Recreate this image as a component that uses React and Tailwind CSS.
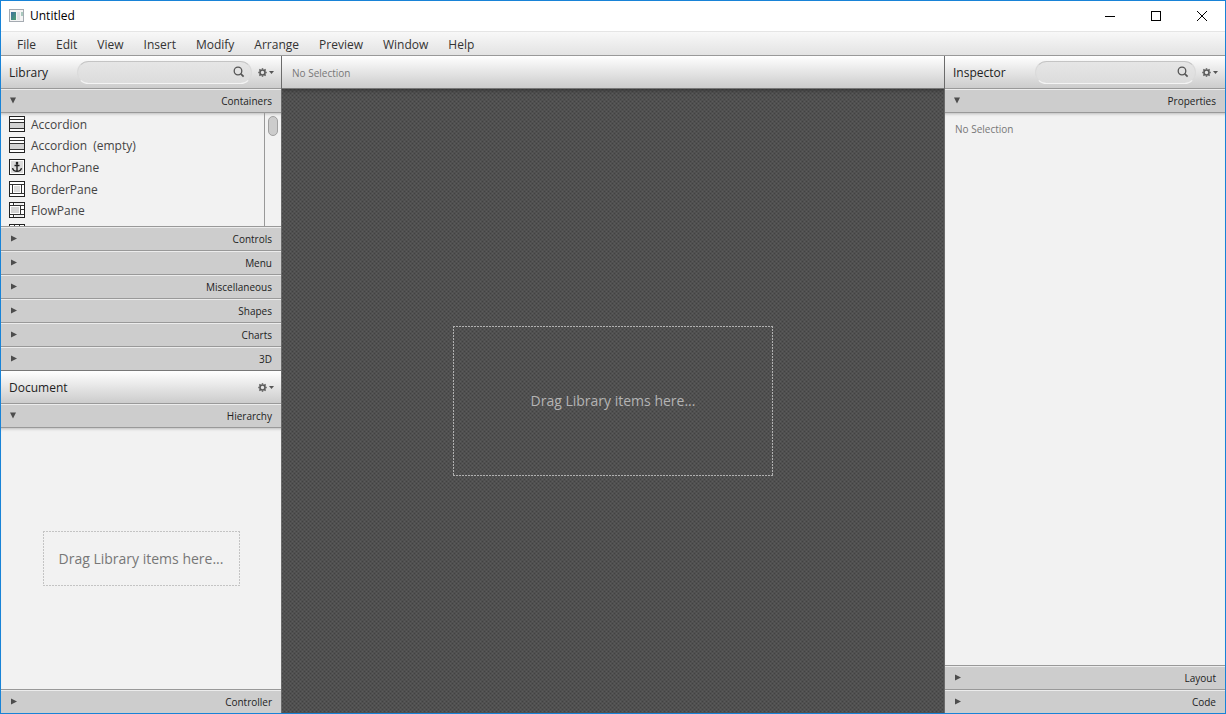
import React from "react";

const MENUS = ["File", "Edit", "View", "Insert", "Modify", "Arrange", "Preview", "Window", "Help"];
const LIBRARY_SECTIONS = ["Controls", "Menu", "Miscellaneous", "Shapes", "Charts", "3D"];

function AccordionIcon() {
  return (
    <>
      <rect x="1" y="7" width="14" height="5" fill="#d4d4d4" />
      <path d="M1 3.5H15M1 6.5H15M1 12.5H15" stroke="#333" />
    </>
  );
}

function AnchorIcon() {
  return (
    <>
      <rect x="2" y="2" width="12" height="12" fill="#dcdcdc" />
      <circle cx="8" cy="4" r="1.3" fill="#222" />
      <path d="M8 4V12M5.5 6.5H10.5" stroke="#222" strokeWidth="1.4" fill="none" />
      <path d="M3.5 9.2C4 11.5 6 12.3 8 12.3S12 11.5 12.5 9.2" stroke="#222" strokeWidth="1.4" fill="none" />
    </>
  );
}

function BorderIcon() {
  return (
    <>
      <rect x="5" y="5" width="6" height="6" fill="#dcdcdc" />
      <path d="M1 3.5H15M1 12.5H15M3.5 4V12M12.5 4V12" stroke="#333" />
    </>
  );
}

function FlowIcon() {
  return (
    <>
      <rect x="2" y="5" width="8" height="6" fill="#d4d4d4" />
      <path d="M1 3.5H15M1 12.5H15M4.5 1V3M11.5 4V12M12 7.5H15M4.5 13V15" stroke="#333" />
      <path d="M6 14H14M6 2H14" stroke="#dcdcdc" />
    </>
  );
}

function GridIcon() {
  return <path d="M5.5 1V15M10.5 1V15M1 5.5H15M1 10.5H15" stroke="#333" />;
}

const CONTAINERS = [
  { name: "Accordion", Icon: AccordionIcon },
  { name: "Accordion", note: "(empty)", Icon: AccordionIcon },
  { name: "AnchorPane", Icon: AnchorIcon },
  { name: "BorderPane", Icon: BorderIcon },
  { name: "FlowPane", Icon: FlowIcon },
  { Icon: GridIcon },
];

function PanelHeader({ title, searchClass, divider }) {
  return (
    <div
      className={
        "flex shrink-0 items-center bg-linear-to-b from-white to-[#cccccc] pr-[7px] pl-2 " +
        (divider ? "h-[33px] border-t border-[#777777]" : "h-8")
      }
    >
      <h2 className="flex-1 pt-[2px] text-xs text-[#222222]">{title}</h2>
      {searchClass && (
        <label
          className={
            "mr-[6px] flex h-[23px] items-center rounded-full border border-t-[#c4c4c4] border-x-[#dadada] border-b-[#f4f4f4] bg-linear-to-b from-[#e6e6e6] to-[#dcdcdc] pr-[6px] pl-3 " +
            searchClass
          }
        >
          <input type="search" aria-label={"Search " + title} className="min-w-0 flex-1 bg-transparent text-xs outline-none" />
          <svg width="12" height="12" viewBox="0 0 12 12" fill="none" stroke="#555" aria-hidden="true">
            <circle cx="5" cy="5" r="3.8" strokeWidth="1.3" />
            <path d="M7.8 7.8L10.6 10.6" strokeWidth="1.7" />
          </svg>
        </label>
      )}
      <button type="button" aria-label={title + " options"} className="flex h-5 items-center gap-[2px]">
        <svg width="9" height="9" viewBox="0 0 9 9" fill="none" stroke="#5a5a5a" aria-hidden="true">
          <circle cx="4.5" cy="4.5" r="2.5" strokeWidth="1.6" />
          <path d="M4.5 0.3V1.6M4.5 7.4V8.7M0.3 4.5H1.6M7.4 4.5H8.7M1.4 1.4L2.5 2.5M6.5 6.5L7.6 7.6M1.4 7.6L2.5 6.5M6.5 2.5L7.6 1.4" strokeWidth="1.5" />
        </svg>
        <svg width="5" height="3" viewBox="0 0 5 3" fill="#555" aria-hidden="true">
          <path d="M0 0H5L2.5 3Z" />
        </svg>
      </button>
    </div>
  );
}

function SectionHeader({ title, open }) {
  return (
    <h3 className="shrink-0">
      <button
        type="button"
        aria-expanded={!!open}
        className="flex h-6 w-full items-center justify-between border-t border-[#999999] bg-[#cdcdcd] px-[9px] text-[10px] text-[#222222] shadow-[inset_0_1px_0_#ececec]"
      >
        <svg width="7" height="7" viewBox="0 0 7 7" fill="#4d4d4d" aria-hidden="true">
          {open ? <path d="M0 0.5H6L3 6.5Z" /> : <path d="M1 0.5L7 3.5L1 6.5Z" />}
        </svg>
        <span className="pt-[2px]">{title}</span>
      </button>
    </h3>
  );
}

function Library() {
  return (
    <section className="flex shrink-0 flex-col">
      <PanelHeader title="Library" searchClass="w-[175px]" />
      <SectionHeader title="Containers" open />
      <div className="flex h-[114px] overflow-hidden border-t border-[#999999] bg-[#f2f2f2] shadow-[inset_0_3px_3px_-2px_#bbbbbb]">
        <ul className="grid h-[130px] flex-1 grid-rows-6 pl-2 text-xs text-[#444444]">
          {CONTAINERS.map(({ name, note, Icon }, i) => (
            <li key={i} className="flex items-center gap-[6px]">
              <svg width="16" height="16" viewBox="0 0 16 16" fill="none" className="shrink-0" aria-hidden="true">
                <rect x="0.5" y="0.5" width="15" height="15" fill="#fff" stroke="#222" />
                <Icon />
              </svg>
              {name && <span className="pt-[2px]">{name}</span>}
              {note && <span className="pt-[2px]">{note}</span>}
            </li>
          ))}
        </ul>
        <div className="w-[17px] border-l border-[#999999] px-[3px] pt-[3px]">
          <div className="h-5 w-[10px] rounded-full border border-[#a0a0a0] bg-[#cccccc]" />
        </div>
      </div>
      {LIBRARY_SECTIONS.map((name) => (
        <SectionHeader key={name} title={name} />
      ))}
    </section>
  );
}

function DashedFrame({ color }) {
  return (
    <svg className="absolute inset-0 h-full w-full" fill="none" stroke={color} strokeDasharray="2 1" aria-hidden="true" shapeRendering="crispEdges">
      <line x1="0" y1="0" x2="100%" y2="0" strokeWidth="2" />
      <line x1="0" y1="100%" x2="100%" y2="100%" strokeWidth="2" />
      <line x1="0" y1="0" x2="0" y2="100%" strokeWidth="2" />
      <line x1="100%" y1="0" x2="100%" y2="100%" strokeWidth="2" />
    </svg>
  );
}

function DocumentPanel() {
  return (
    <section className="flex min-h-0 flex-1 flex-col">
      <PanelHeader title="Document" divider />
      <SectionHeader title="Hierarchy" open />
      <div className="flex flex-1 items-center justify-center border-t border-[#999999] bg-[#f2f2f2] shadow-[inset_0_3px_3px_-2px_#bbbbbb]">
        <div className="relative flex h-[55px] w-[197px] items-center justify-center text-sm text-[#777777]">
          <DashedFrame color="#c4c4c4" />
          <p>Drag Library items here...</p>
        </div>
      </div>
      <SectionHeader title="Controller" />
    </section>
  );
}

function Weave() {
  return (
    <svg className="absolute inset-0 h-full w-full" aria-hidden="true" shapeRendering="crispEdges">
      <defs>
        <pattern id="weave" width="4" height="4" patternUnits="userSpaceOnUse">
          <rect width="4" height="4" fill="#505050" />
          <path d="M0 0H1V1H0ZM2 2H3V3H2Z" fill="#424242" />
          <path d="M2 0H3V1H2ZM0 2H1V3H0Z" fill="#5b5b5b" />
        </pattern>
      </defs>
      <rect width="100%" height="100%" fill="url(#weave)" />
    </svg>
  );
}

export default function App() {
  return (
    <div className="flex h-screen flex-col overflow-hidden border border-[#1883d7] bg-white font-['Open_Sans','Noto_Sans',sans-serif]">
      <header className="flex h-[30px] shrink-0 items-center justify-between pl-2">
        <div className="flex items-center gap-[6px]">
          <svg width="15" height="14" viewBox="0 0 15 14" aria-hidden="true">
            <defs>
              <linearGradient id="pane" x1="0" y1="0" x2="1" y2="1">
                <stop offset="0" stopColor="#3d6fa0" />
                <stop offset="1" stopColor="#4ca070" />
              </linearGradient>
            </defs>
            <rect x="0.5" y="0.5" width="14" height="12" fill="#f4f4f4" stroke="#a5abb2" />
            <rect x="2" y="3" width="5" height="8" fill="url(#pane)" />
            <rect x="8" y="3" width="3" height="8" fill="#dfe2e5" />
            <rect x="12" y="3" width="2" height="4" fill="#a9c8bd" />
          </svg>
          <h1 className="text-xs text-black">Untitled</h1>
        </div>
        <div className="flex h-full">
          <button type="button" aria-label="Minimize" className="flex w-[46px] items-center justify-center">
            <svg width="10" height="10" viewBox="0 0 10 10" stroke="#000"><path d="M0 5.5H10" /></svg>
          </button>
          <button type="button" aria-label="Maximize" className="flex w-[46px] items-center justify-center">
            <svg width="10" height="10" viewBox="0 0 10 10" fill="none" stroke="#000"><rect x="0.5" y="0.5" width="9" height="9" /></svg>
          </button>
          <button type="button" aria-label="Close" className="flex w-[46px] items-center justify-center">
            <svg width="10" height="10" viewBox="0 0 10 10" stroke="#000"><path d="M0 0L10 10M10 0L0 10" /></svg>
          </button>
        </div>
      </header>

      <nav className="flex h-[25px] shrink-0 items-center border-y border-t-[#e5e5e5] border-b-[#999999] bg-linear-to-b from-[#f8f8f8] to-[#e3e3e3] pt-[2px] pl-[6px] text-xs text-[#333333]">
        {MENUS.map((m) => (
          <button key={m} type="button" className="px-[10px]">{m}</button>
        ))}
      </nav>

      <div className="flex min-h-0 flex-1">
        <aside className="flex w-[281px] shrink-0 flex-col border-r border-[#6b6b6b]">
          <Library />
          <DocumentPanel />
        </aside>

        <main className="flex min-w-0 flex-1 flex-col overflow-hidden">
          <div className="relative z-10 flex h-[33px] shrink-0 items-center border-b border-[#777777] bg-linear-to-b from-white to-[#cccccc] px-[10px] pt-[2px] text-[10px] text-[#777777] shadow-[0_1px_4px_#333333]">
            No Selection
          </div>
          <div className="relative flex flex-1 items-center justify-center">
            <Weave />
            <div className="relative flex h-[150px] w-80 items-center justify-center text-sm text-[#b4b4b4]">
              <DashedFrame color="#b0b0b0" />
              <p>Drag Library items here...</p>
            </div>
          </div>
        </main>

        <aside className="flex w-[281px] shrink-0 flex-col border-l border-[#6b6b6b]">
          <PanelHeader title="Inspector" searchClass="w-[161px]" />
          <SectionHeader title="Properties" open />
          <div className="flex-1 border-t border-[#999999] bg-[#f2f2f2] px-[10px] pt-2 text-[10px] leading-4 text-[#777777] shadow-[inset_0_3px_3px_-2px_#bbbbbb]">
            No Selection
          </div>
          <SectionHeader title="Layout" />
          <SectionHeader title="Code" />
        </aside>
      </div>
    </div>
  );
}
